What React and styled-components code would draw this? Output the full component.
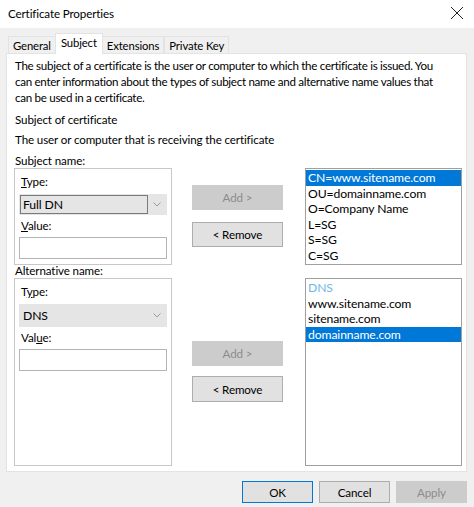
import React from 'react'
import styled, { createGlobalStyle } from 'styled-components'

const Global = createGlobalStyle`
  html, body { margin: 0; padding: 0; background: #ffffff; }
  body {
    font-family: "Segoe UI", Lato, "Noto Sans", sans-serif;
    font-size: 11.6px;
    letter-spacing: -0.12px;
    color: #000;
  }
  * { box-sizing: border-box; }
`

const Window = styled.div`
  width: 474px;
  height: 507px;
  display: flex;
  flex-direction: column;
  background: #f0f0f0;
`

const TitleBar = styled.div`
  height: 28px;
  background: #ffffff;
  display: flex;
  align-items: center;
  justify-content: space-between;
  padding: 0 8px 2px 8px;
  font-size: 11.6px;
`

const Close = styled.div`
  width: 14px;
  height: 14px;
  margin-right: 2px;
  display: flex;
`

const Body = styled.div`
  flex: 1;
  display: flex;
  flex-direction: column;
  padding: 5px 7px 0 6px;
`

const Tabs = styled.div`
  display: flex;
  height: 20px;
  padding-left: 2px;
  align-items: flex-end;
`

const Tab = styled.div`
  height: ${p => (p.active ? '21px' : '17px')};
  padding: 0 ${p => (p.active ? '5px' : '4px')};
  display: flex;
  align-items: center;
  font-size: 11.3px;
  padding-bottom: ${p => (p.active ? '3px' : '0')};
  background: ${p => (p.active ? '#ffffff' : '#f0f0f0')};
  border: 1px solid #e3e3e3;
  border-bottom: none;
  margin-left: ${p => (p.active ? '-1px' : '0')};
  margin-right: ${p => (p.active ? '-1px' : '0')};
  position: relative;
  z-index: ${p => (p.active ? 1 : 0)};
  margin-bottom: ${p => (p.active ? '-1px' : '0')};
`

const Panel = styled.div`
  height: 419px;
  background: #ffffff;
  border: 1px solid #e3e3e3;
  padding: 4px 7px 0 7px;
  display: flex;
  flex-direction: column;
`

const Para = styled.p`
  margin: 0;
  line-height: 16px;
  padding-left: 1px;
  white-space: nowrap;
  letter-spacing: ${p => (p.tight ? '-0.3px' : 'inherit')};
  margin-top: ${p => p.mt || 0}px;
`

const Row = styled.div`
  display: grid;
  grid-template-columns: 158px 133px 157px;
  height: ${p => p.h}px;
`

const Group = styled.div`
  border: 1px solid #c8c8c8;
  padding: 5px 4px 0 4px;
  display: flex;
  flex-direction: column;
`

const FieldLabel = styled.div`
  line-height: 16px;
  padding-left: 2px;
  margin-bottom: ${p => p.mb}px;
  u { text-decoration: underline; }
`

const Combo = styled.div`
  height: ${p => p.h}px;
  background: #e5e5e5;
  display: flex;
  align-items: center;
  padding: 1px;
  margin-bottom: 3px;
`

const ComboText = styled.div`
  flex: 1;
  height: 100%;
  display: flex;
  align-items: center;
  padding-left: 2px;
  font-size: 12.2px;
  border: 1px solid ${p => (p.focused ? '#7a7a7a' : 'transparent')};
`

const Chevron = styled.div`
  width: 18px;
  display: flex;
  justify-content: center;
  align-items: center;
`

const Input = styled.div`
  height: 22px;
  border: 1px solid #b5b5b5;
  background: #fff;
`

const Buttons = styled.div`
  display: flex;
  flex-direction: column;
  padding: ${p => p.pt}px 0 0 20px;
  gap: ${p => p.gap}px;
`

const Button = styled.div`
  width: ${p => p.w || 91}px;
  height: ${p => p.h || 25}px;
  display: flex;
  align-items: center;
  justify-content: center;
  background: ${p => (p.disabled ? '#cccccc' : '#e1e1e1')};
  color: ${p => (p.disabled ? '#8c8c8c' : '#000')};
  border: 1px solid ${p => (p.primary ? '#0078d7' : p.disabled ? '#cccccc' : '#adadad')};
`

const List = styled.div`
  border: 1px solid #a0a0a0;
  background: #fff;
  padding: 1px 0;
  font-size: 12.2px;
`

const Item = styled.div`
  height: 15.5px;
  line-height: 15.5px;
  padding-left: 2px;
  background: ${p => (p.selected ? '#0078d7' : 'transparent')};
  color: ${p => (p.selected ? '#fff' : p.header ? '#6fb8e6' : '#000')};
`

const SectionLabel = styled.div`
  line-height: 16px;
  height: 15px;
  padding-left: 1px;
  margin-top: ${p => p.mt || 0}px;
`

const Footer = styled.div`
  flex: 1;
  display: flex;
  justify-content: flex-end;
  align-items: flex-start;
  padding-top: 9px;
  gap: 6px;
`

const ChevronIcon = () => (
  <svg width="8" height="5" viewBox="0 0 8 5">
    <path d="M0.5 0.5 L4 4 L7.5 0.5" fill="none" stroke="#9a9a9a" strokeWidth="1" />
  </svg>
)

const NameGroup = ({ type, focused, comboH, typeLabel, valueLabel }) => (
  <Group>
    <FieldLabel mb={4}>{typeLabel}</FieldLabel>
    <Combo h={comboH}>
      <ComboText focused={focused}>{type}</ComboText>
      <Chevron><ChevronIcon /></Chevron>
    </Combo>
    <FieldLabel mb={3}>{valueLabel}</FieldLabel>
    <Input />
  </Group>
)

export default function App() {
  return (
    <Window>
      <Global />
      <TitleBar>
        <span>Certificate Properties</span>
        <Close>
          <svg width="14" height="14" viewBox="0 0 14 14">
            <path d="M1 1 L13 13 M13 1 L1 13" stroke="#222" strokeWidth="1" />
          </svg>
        </Close>
      </TitleBar>
      <Body>
        <Tabs>
          <Tab>General</Tab>
          <Tab active>Subject</Tab>
          <Tab>Extensions</Tab>
          <Tab>Private Key</Tab>
        </Tabs>
        <Panel>
          <Para tight>The subject of a certificate is the user or computer to which the certificate is issued. You</Para>
          <Para tight>can enter information about the types of subject name and alternative name values that</Para>
          <Para tight>can be used in a certificate.</Para>
          <Para mt={6}>Subject of certificate</Para>
          <Para mt={4}>The user or computer that is receiving the certificate</Para>
          <SectionLabel mt={5}>Subject name:</SectionLabel>
          <Row h={95}>
            <NameGroup
              type="Full DN"
              focused
              comboH={21}
              typeLabel={<><u>T</u>ype:</>}
              valueLabel={<><u>V</u>alue:</>}
            />
            <Buttons pt={17} gap={12}>
              <Button disabled>Add &gt;</Button>
              <Button>&lt; Remove</Button>
            </Buttons>
            <List>
              <Item selected>CN=www.sitename.com</Item>
              <Item>OU=domainname.com</Item>
              <Item>O=Company Name</Item>
              <Item>L=SG</Item>
              <Item>S=SG</Item>
              <Item>C=SG</Item>
            </List>
          </Row>
          <SectionLabel>Alternative name:</SectionLabel>
          <Row h={188}>
            <NameGroup
              type="DNS"
              comboH={23}
              typeLabel={<>T<u>y</u>pe:</>}
              valueLabel={<>Val<u>u</u>e:</>}
            />
            <Buttons pt={63} gap={10}>
              <Button disabled>Add &gt;</Button>
              <Button h={26}>&lt; Remove</Button>
            </Buttons>
            <List>
              <Item header>DNS</Item>
              <Item>www.sitename.com</Item>
              <Item>sitename.com</Item>
              <Item selected>domainname.com</Item>
            </List>
          </Row>
        </Panel>
        <Footer>
          <Button primary w={71} h={22}>OK</Button>
          <Button w={71} h={22}>Cancel</Button>
          <Button disabled w={71} h={22}>Apply</Button>
        </Footer>
      </Body>
    </Window>
  )
}
